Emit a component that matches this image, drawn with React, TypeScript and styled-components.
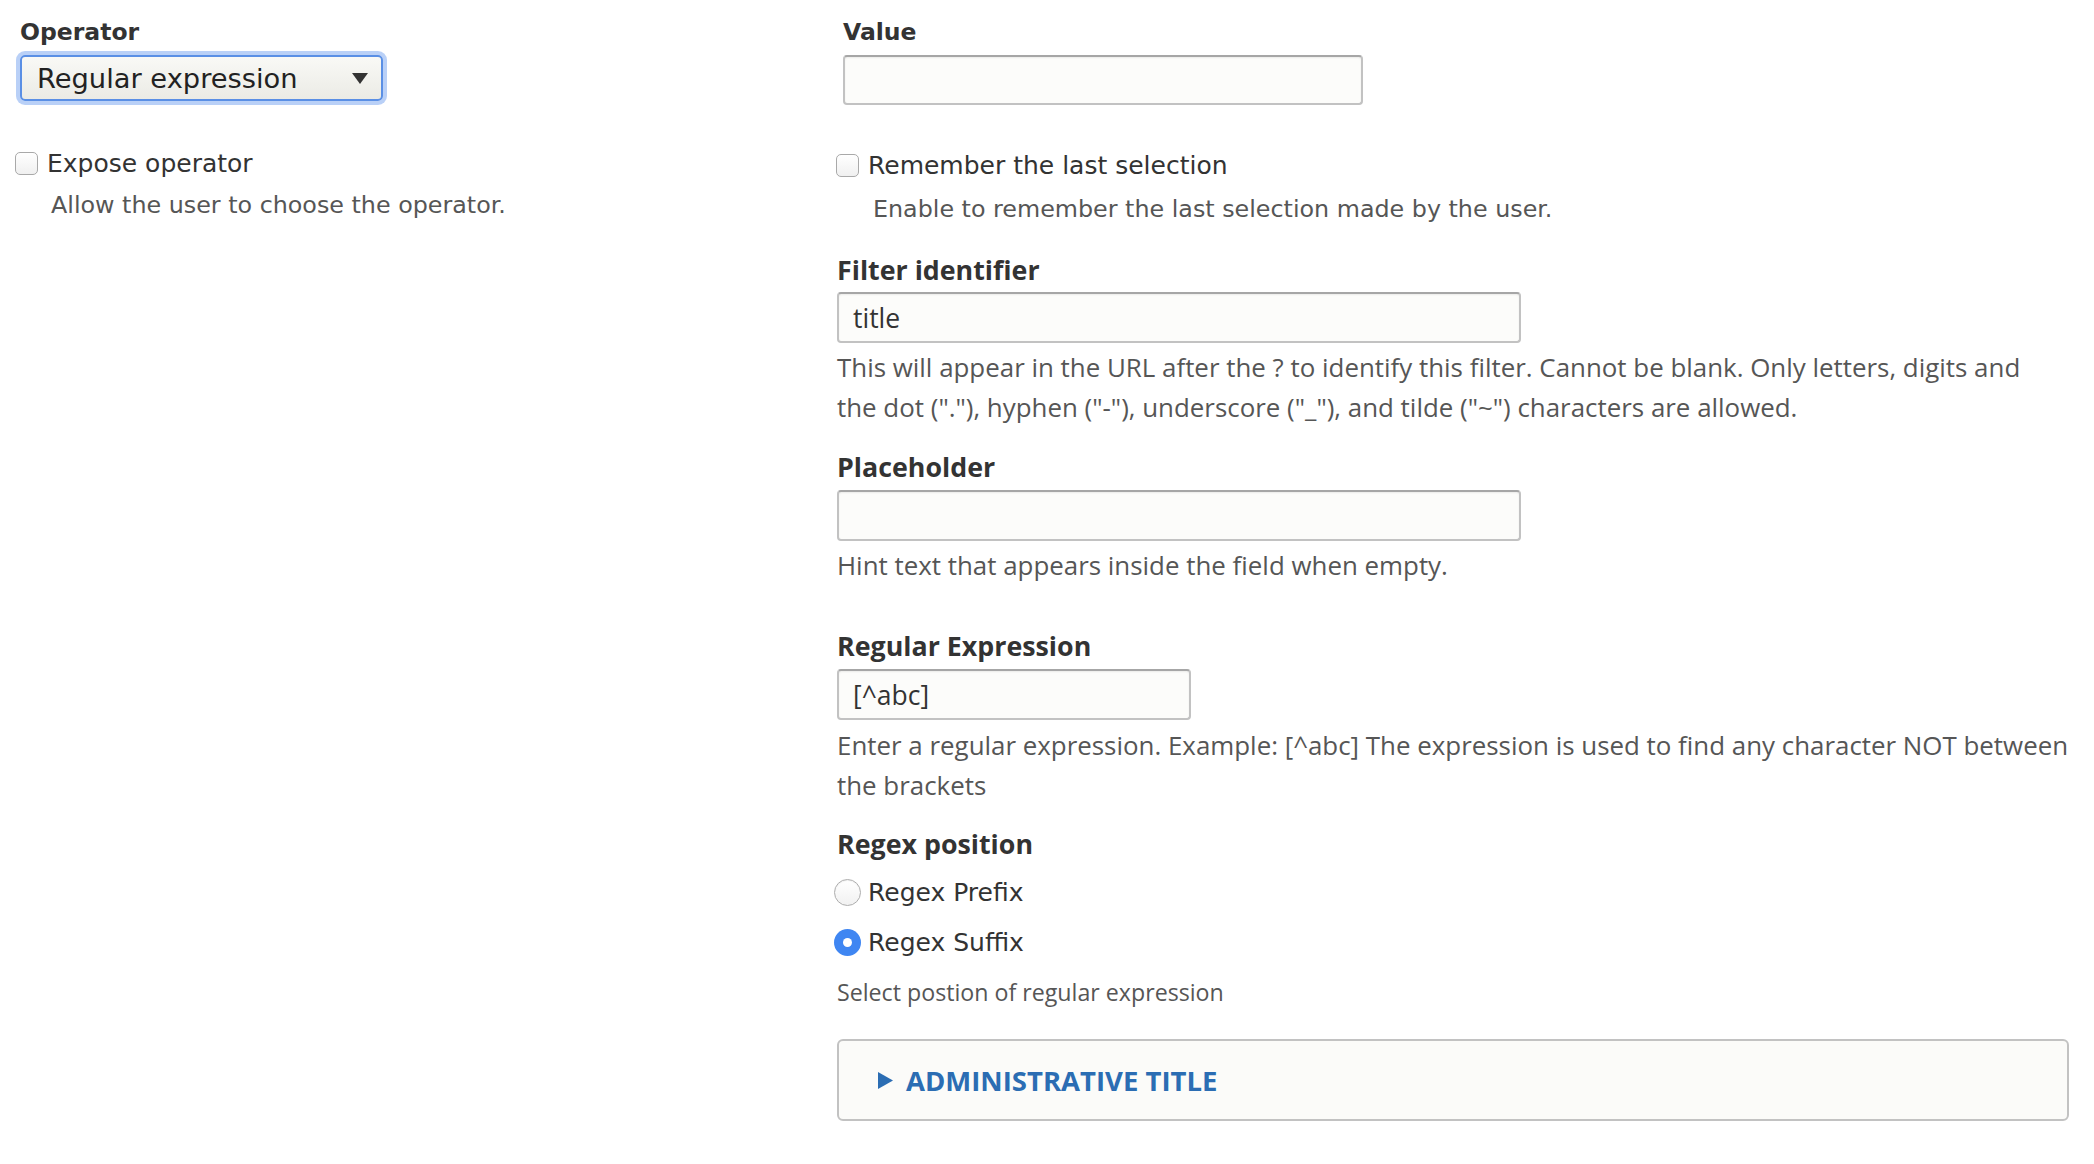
import { createGlobalStyle, styled } from "styled-components"

const GlobalStyle = createGlobalStyle`
    body {
        margin: 0;
        background: #fff;
        color: #333;
    }
`

const lucida = `"DejaVu Sans", "Lucida Grande", sans-serif`
const myriad = `"Open Sans", "Noto Sans", sans-serif`

const Page = styled.div`
    display: grid;
    grid-template-columns: 821px 1236px;
    padding: 15px 0 0 15px;
`

const Column = styled.div`
    display: flex;
    flex-direction: column;
    align-items: flex-start;
`

const Label = styled.label<{ $mt?: number; $ml?: number; $lucida?: boolean }>`
    display: block;
    margin-top: ${p => p.$mt ?? 0}px;
    margin-left: ${p => p.$ml ?? 1}px;
    font-family: ${p => (p.$lucida ? lucida : myriad)};
    font-size: ${p => (p.$lucida ? 23.5 : 26.8)}px;
    font-weight: 700;
    line-height: 34px;
    color: #333;
`

const SelectBox = styled.div`
    margin: 6px 0 0 5px;
    width: 363px;
    height: 46px;
    box-sizing: border-box;
    display: flex;
    align-items: center;
    justify-content: space-between;
    padding: 0 13px 0 15px;
    border: 2px solid #5a8fe5;
    border-radius: 5px;
    background: linear-gradient(#f9f9f6, #ebebe5);
    box-shadow: 0 0 0 4px rgba(128, 170, 240, 0.55);
    font-family: ${lucida};
    font-size: 27.3px;
    color: #222;
`

const TextInput = styled.div<{ $w: number; $h?: number; $mt?: number; $ml?: number }>`
    margin-top: ${p => p.$mt ?? 6}px;
    margin-left: ${p => p.$ml ?? 1}px;
    width: ${p => p.$w}px;
    height: ${p => p.$h ?? 51}px;
    box-sizing: border-box;
    display: flex;
    align-items: center;
    padding-left: 14px;
    border: 2px solid #c2c2c2;
    border-top-color: #a6a6a6;
    border-radius: 4px;
    background: #fcfcfa;
    box-shadow: inset 0 1px 2px rgba(0, 0, 0, 0.07);
    font-family: ${myriad};
    font-size: 26.5px;
    color: #333;
`

const CheckRow = styled.div<{ $mt: number }>`
    margin-top: ${p => p.$mt}px;
    height: 34px;
    display: flex;
    align-items: center;
    gap: 9px;
    font-family: ${lucida};
    font-size: 25px;
    color: #333;
`

const CheckBox = styled.span`
    width: 23px;
    height: 23px;
    box-sizing: border-box;
    border: 1.5px solid #a9a9a9;
    border-radius: 5px;
    background: linear-gradient(#fff, #f0f0f0);
`

const RadioRow = styled.div<{ $mt?: number }>`
    margin-top: ${p => p.$mt ?? 0}px;
    margin-left: -2px;
    height: 50px;
    display: flex;
    align-items: center;
    gap: 7px;
    font-family: ${lucida};
    font-size: 25px;
    color: #333;
`

const Radio = styled.span<{ $checked?: boolean }>`
    width: 27px;
    height: 27px;
    box-sizing: border-box;
    border-radius: 50%;
    display: flex;
    align-items: center;
    justify-content: center;
    border: ${p => (p.$checked ? "none" : "1.5px solid #adadad")};
    background: ${p => (p.$checked ? "#3f86f2" : "linear-gradient(#fff, #f1f1f1)")};
    box-shadow: ${p => (p.$checked ? "none" : "inset 0 1px 1px rgba(0,0,0,0.06)")};

    &::after {
        content: "";
        display: ${p => (p.$checked ? "block" : "none")};
        width: 9px;
        height: 9px;
        border-radius: 50%;
        background: #fff;
    }
`

const Description = styled.div<{ $mt: number; $ml?: number; $lucida?: boolean; $size?: number; $lh?: number; $maxw?: number }>`
    margin-top: ${p => p.$mt}px;
    margin-left: ${p => p.$ml ?? 1}px;
    max-width: ${p => (p.$maxw ? `${p.$maxw}px` : "none")};
    font-family: ${p => (p.$lucida ? lucida : myriad)};
    font-size: ${p => p.$size ?? (p.$lucida ? 23.8 : 25.9)}px;
    line-height: ${p => p.$lh ?? (p.$lucida ? 34 : 40)}px;
    color: #565656;
`

const Details = styled.div`
    margin: 30px 0 0 1px;
    width: 1232px;
    height: 82px;
    box-sizing: border-box;
    display: flex;
    align-items: center;
    gap: 13px;
    padding-left: 39px;
    border: 2px solid #c2c2c2;
    border-radius: 6px;
    background: #fbfbf9;
`

const Summary = styled.span`
    font-family: ${myriad};
    font-size: 27.5px;
    font-weight: 700;
    text-transform: uppercase;
    color: #2b6db3;
`

export default function App() {
    return (<>
        <GlobalStyle />
        <Page>
            <Column>
                <Label $lucida $ml={5}>Operator</Label>
                <SelectBox>
                    Regular expression
                    <svg width="16" height="11" viewBox="0 0 16 11">
                        <path d="M0 0h16L8 11z" fill="#333" />
                    </svg>
                </SelectBox>
                <CheckRow $mt={45}>
                    <CheckBox />
                    Expose operator
                </CheckRow>
                <Description $mt={8} $ml={36} $lucida>Allow the user to choose the operator.</Description>
            </Column>

            <Column>
                <Label $lucida $ml={7}>Value</Label>
                <TextInput $w={520} $h={50} $ml={7} />
                <CheckRow $mt={43}>
                    <CheckBox />
                    Remember the last selection
                </CheckRow>
                <Description $mt={10} $ml={37} $lucida>Enable to remember the last selection made by the user.</Description>

                <Label $mt={27}>Filter identifier</Label>
                <TextInput $w={684} $mt={5}>title</TextInput>
                <Description $mt={4} $maxw={1215}>
                    This will appear in the URL after the ? to identify this filter. Cannot be blank. Only letters, digits and the dot ("."), hyphen ("-"), underscore ("_"), and tilde ("~") characters are allowed.
                </Description>

                <Label $mt={23}>Placeholder</Label>
                <TextInput $w={684} />
                <Description $mt={4}>Hint text that appears inside the field when empty.</Description>

                <Label $mt={44}>Regular Expression</Label>
                <TextInput $w={354}>[^abc]</TextInput>
                <Description $mt={5}>
                    Enter a regular expression. Example: [^abc] The expression is used to find any character NOT between the brackets
                </Description>

                <Label $mt={22}>Regex position</Label>
                <RadioRow $mt={6}>
                    <Radio />
                    Regex Prefix
                </RadioRow>
                <RadioRow>
                    <Radio $checked />
                    Regex Suffix
                </RadioRow>
                <Description $mt={8} $size={23.2} $lh={34}>Select postion of regular expression</Description>

                <Details>
                    <svg width="15" height="17" viewBox="0 0 15 17">
                        <path d="M0 0l15 8.5L0 17z" fill="#2b6db3" />
                    </svg>
                    <Summary>Administrative title</Summary>
                </Details>
            </Column>
        </Page>
    </>)
}
